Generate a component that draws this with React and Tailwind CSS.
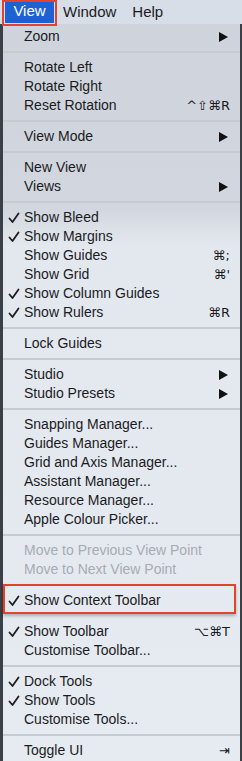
import React from "react";

const SEP = "sep";

const items = [
  { label: "Zoom", arrow: true },
  SEP,
  { label: "Rotate Left" },
  { label: "Rotate Right" },
  { label: "Reset Rotation", shortcut: "^⇧⌘R" },
  SEP,
  { label: "View Mode", arrow: true },
  SEP,
  { label: "New View" },
  { label: "Views", arrow: true },
  SEP,
  { label: "Show Bleed", checked: true },
  { label: "Show Margins", checked: true },
  { label: "Show Guides", shortcut: "⌘;" },
  { label: "Show Grid", shortcut: "⌘'" },
  { label: "Show Column Guides", checked: true },
  { label: "Show Rulers", checked: true, shortcut: "⌘R" },
  SEP,
  { label: "Lock Guides" },
  SEP,
  { label: "Studio", arrow: true },
  { label: "Studio Presets", arrow: true },
  SEP,
  { label: "Snapping Manager..." },
  { label: "Guides Manager..." },
  { label: "Grid and Axis Manager..." },
  { label: "Assistant Manager..." },
  { label: "Resource Manager..." },
  { label: "Apple Colour Picker..." },
  SEP,
  { label: "Move to Previous View Point", disabled: true },
  { label: "Move to Next View Point", disabled: true },
  "boxsep",
  { label: "Show Context Toolbar", checked: true, boxed: true },
  "boxsep",
  { label: "Show Toolbar", checked: true, shortcut: "⌥⌘T" },
  { label: "Customise Toolbar..." },
  SEP,
  { label: "Dock Tools", checked: true },
  { label: "Show Tools", checked: true },
  { label: "Customise Tools..." },
  SEP,
  { label: "Toggle UI", shortcut: "⇥" },
];

function Check() {
  return (
    <svg width="12" height="12" viewBox="0 0 12 12" className="absolute left-[5px] top-[4px]">
      <path d="M1.5 6.5 L4.5 10 L10.5 1.5" fill="none" stroke="#1d1d1f" strokeWidth="1.8" strokeLinecap="round" strokeLinejoin="round" />
    </svg>
  );
}

function Arrow() {
  return (
    <svg width="9" height="10" viewBox="0 0 9 10" className="absolute right-[12px] top-[5px]">
      <path d="M0 0 L9 5 L0 10 Z" fill="#111" />
    </svg>
  );
}

function Item({ item }) {
  return (
    <div
      className={
        "relative h-[19px] flex items-center pl-[21px] pr-[10px] text-[14px] leading-[19px] " +
        (item.disabled ? "text-[#a7abb2]" : "text-[#1b1b1d]")
      }
    >
      {item.checked && <Check />}
      <span className="flex-1 whitespace-nowrap">{item.label}</span>
      {item.shortcut && <span className="whitespace-nowrap font-['DejaVu_Sans',sans-serif] text-[13px]">{item.shortcut}</span>}
      {item.arrow && <Arrow />}
    </div>
  );
}

function Separator() {
  return (
    <div className="h-[12px] flex items-center">
      <div className="h-[2px] w-full bg-[#c6cad1]" />
    </div>
  );
}

export default function App() {
  return (
    <div className="relative w-[242px] h-[761px] overflow-hidden bg-[#3b3f46] font-['Liberation_Sans',Arial,sans-serif]">
      <div className="relative h-[24px] flex items-center bg-[#d8dee8] text-[15px] text-[#1b1b1d]">
        <div className="ml-[5px] w-[49px] h-[23px] self-start bg-[#1c62d3] text-white flex items-center justify-center">
          View
        </div>
        <span className="ml-[9px]">Window</span>
        <span className="ml-[16px]">Help</span>
        <div className="absolute left-[2px] top-0 w-[55px] h-[26px] border-2 border-[#e2432b]" />
      </div>
      <div className="ml-[3px] w-[237px] h-[737px] pt-[3px] bg-[linear-gradient(180deg,#cfd4dc_0%,#d2d7df_25%,#e3e8ef_30%,#e6ebf2_100%)]">
        {items.map((it, i) => {
          if (it === SEP) return <Separator key={i} />;
          if (it === "boxsep") return <div key={i} className="h-[12px]" />;
          if (it.boxed)
            return (
              <div key={i} className="relative">
                <Item item={it} />
                <div className="absolute left-[0px] right-[4px] top-[-7px] bottom-[-4px] border-2 border-[#e2432b] shadow-[0_2px_3px_rgba(0,0,0,0.25)]" />
              </div>
            );
          return <Item key={i} item={it} />;
        })}
      </div>
    </div>
  );
}
